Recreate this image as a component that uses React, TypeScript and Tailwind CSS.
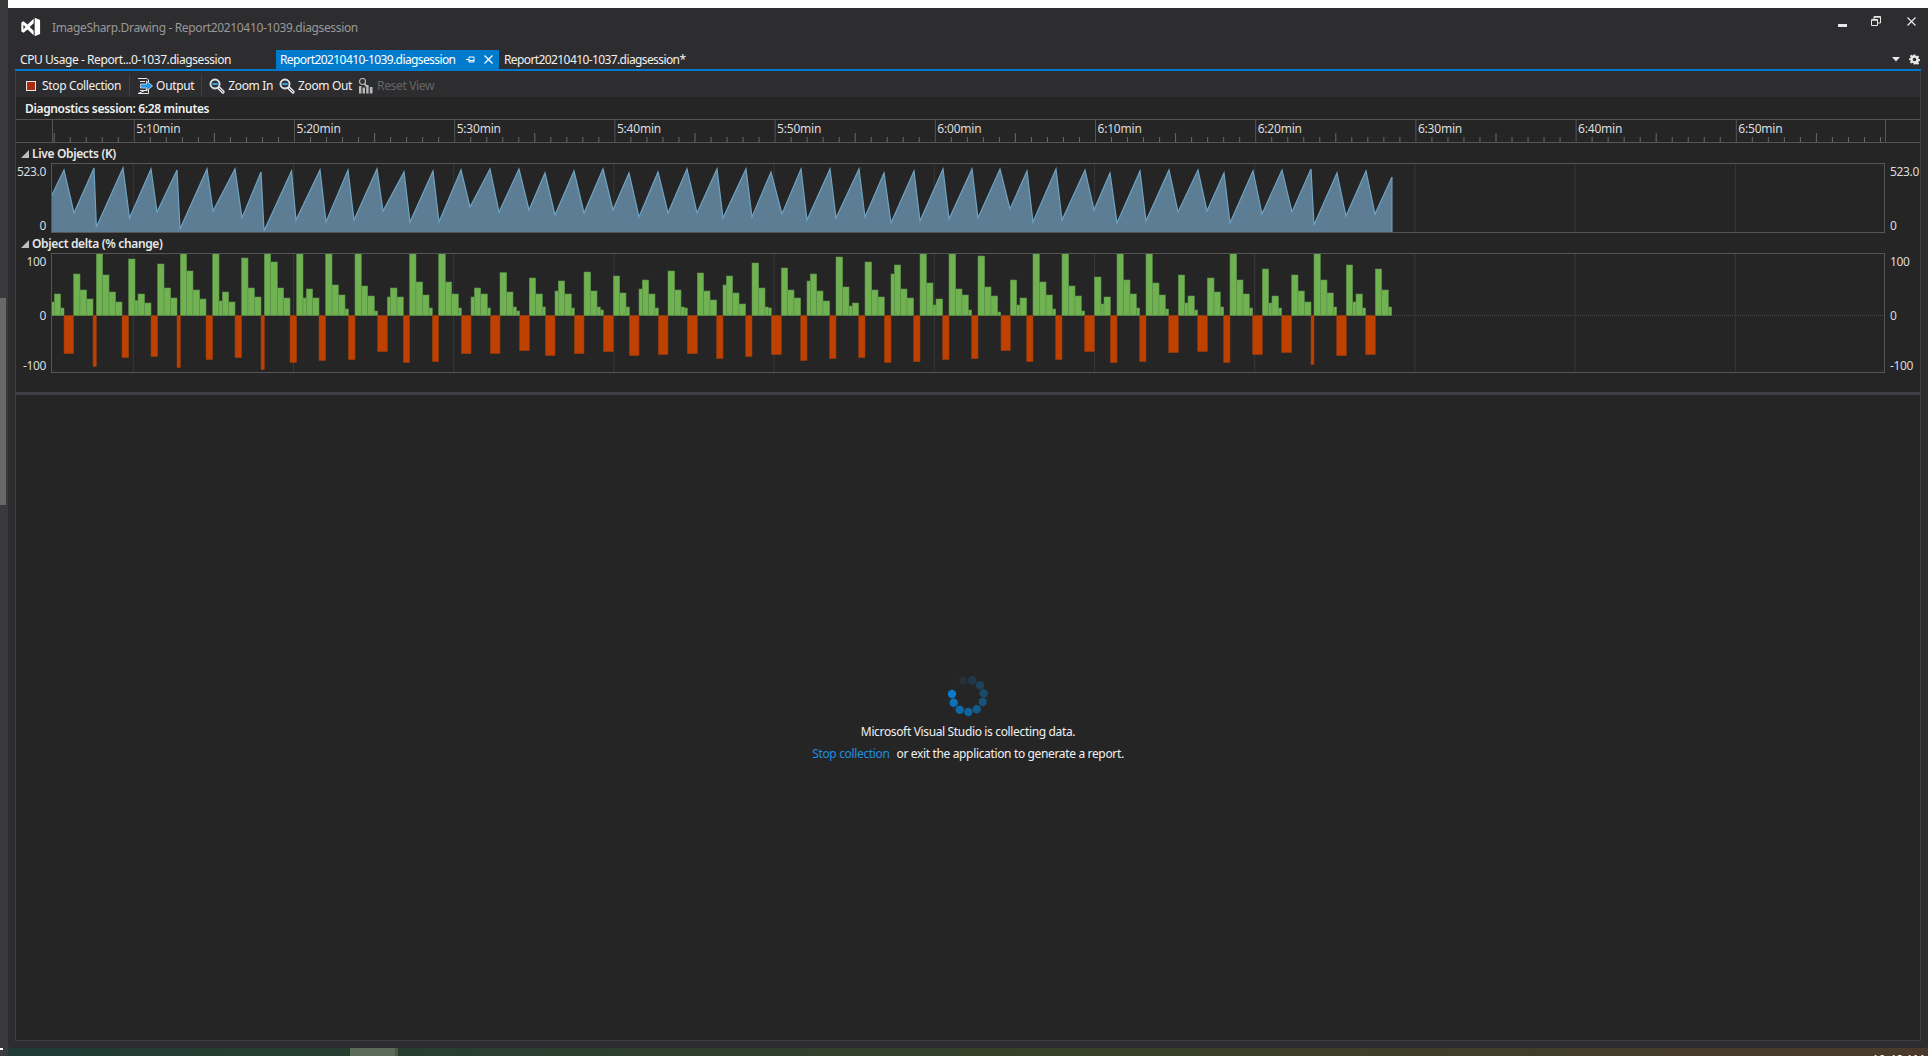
const FONT = "font-['Noto_Sans',sans-serif]";

// bars traced from the chart: [left, right, end], in 3x crop units
const GREEN: [number, number, number][][] = [
  [[155,163,216],[163,182,192],[182,192,234],[221,240,132],[240,260,180],[260,279,207],[289,308,72],[308,327,135],[327,347,186],[347,366,216],[386,405,87],[405,414,212],[414,434,192],[434,453,219],[473,492,102],[492,512,174],[512,531,204],[541,560,72],[560,579,123],[579,599,180],[599,618,207],[638,657,72],[657,667,213],[667,686,186],[686,705,216],[725,744,84],[744,763,174],[763,783,201],[793,812,72],[812,832,96],[832,851,174],[851,870,204],[890,909,72],[909,919,204],[919,938,177],[938,957,204],[977,996,72],[996,1015,165],[1015,1035,195],[1035,1045,237],[1065,1084,72],[1084,1103,168],[1103,1123,198],[1123,1133,243],[1162,1171,201],[1171,1191,174],[1191,1210,201],[1229,1248,72],[1248,1268,156],[1268,1287,195],[1287,1297,234],[1316,1336,72],[1336,1355,156],[1355,1375,192],[1375,1384,234],[1413,1423,201],[1423,1442,174],[1442,1462,192],[1462,1471,234]],
  [[0,20,368],[20,39,426],[39,49,471],[49,59,483],[88,107,384],[107,127,432],[127,136,471],[165,175,423],[175,194,393],[194,214,432],[214,223,474],[252,272,366],[272,291,423],[291,301,471],[301,310,480],[340,359,378],[359,378,429],[378,388,471],[417,427,417],[427,446,390],[446,465,432],[465,475,474],[504,524,363],[524,543,420],[543,553,471],[553,562,474],[592,611,369],[611,630,423],[630,650,450],[669,679,405],[679,698,378],[698,717,429],[717,737,462],[756,776,339],[776,795,414],[795,805,471],[805,814,474],[844,863,354],[863,882,420],[882,902,444],[921,931,393],[931,950,372],[950,969,423],[969,989,453],[1008,1028,321],[1028,1047,411],[1047,1057,468],[1057,1076,459],[1095,1115,336],[1115,1134,420],[1134,1153,441],[1173,1183,372],[1183,1202,345],[1202,1221,417],[1221,1241,444],[1260,1279,312],[1279,1299,399],[1299,1308,465],[1308,1328,447],[1347,1367,312],[1367,1386,417],[1386,1405,435],[1405,1415,480],[1434,1454,318],[1454,1473,411],[1473,1493,438],[1493,1502,486]],
  [[31,50,390],[50,60,465],[60,80,444],[99,118,312],[118,138,396],[138,157,435],[157,167,477],[186,206,312],[206,225,408],[225,244,438],[244,254,483],[283,303,381],[303,312,462],[312,331,441],[351,370,312],[370,390,390],[390,409,432],[409,419,474],[438,457,312],[457,477,399],[477,496,435],[496,506,477],[535,554,375],[554,564,459],[564,583,438],[583,593,480],[622,642,384],[642,661,426],[661,671,471],[690,710,312],[710,729,390],[729,748,432],[748,758,474],[787,806,357],[806,816,459],[816,835,438],[835,845,474],[875,894,375],[894,913,423],[913,933,456],[942,961,312],[961,981,390],[981,1000,429],[1000,1010,471],[1039,1058,345],[1058,1068,456],[1068,1087,432],[1087,1097,474],[1126,1145,357],[1145,1165,420],[1165,1175,471]],
];
const RED: [number, number, number][][] = [
  [[192,221,371],[279,289,410],[366,386,383],[453,473,380],[531,541,413],[618,638,389],[705,725,383],[783,793,419],[870,890,398],[957,977,392],[1045,1065,389],[1133,1162,365],[1210,1229,398],[1297,1316,395],[1384,1413,371],[1471,1500,371]],
  [[59,88,602],[136,165,617],[223,252,611],[310,340,605],[388,417,617],[475,504,614],[562,592,611],[650,669,626],[737,756,620],[814,844,614],[902,921,632],[989,1008,626],[1076,1095,623],[1153,1173,638],[1241,1260,635],[1328,1347,629],[1415,1434,626]],
  [[3,31,602],[80,99,635],[167,186,629],[254,283,605],[331,351,638],[419,438,635],[506,535,608],[593,622,605],[671,690,638],[758,787,614],[845,875,608],[933,942,644],[1010,1039,617],[1097,1126,614]],
];
const CROP = [{ x: 0, y: 230 }, { x: 500, y: 150 }, { x: 1000, y: 150 }];
const ZERO = 315.5;

const SAW = "51,197 64,170 74,213 94,168 96.4,227 123,168 129.5,218 151,169 157,212 177,170 180,229 207,169 213,211 235,169 242,218 261,172 264,231 291.5,171 296,220 320,170 326,222 348,170 354,220 377,169 383,211 404,172 410,222 433,171 439,222 461,170 470,207 490,169 499,212 519,169 529,210 545,173 555,215 574,171 584,213 603,169 613,210 629,173 639,217 658,172 668,213 687,169 697,213 717,169 723,218 746,169 752,217 771,172 782,214 801,169 807,220 830,169 836,218 859,169 865,217 884,173 891,223 914,171 920,221 943,169 949,219 972,169 978,218 1000,169 1010,209 1027,171 1033,222 1056,169 1062,220 1085,170 1094,210 1110,173 1117,223 1140,171 1146,221 1169,170 1178,212 1198,170 1207,211 1224,173 1230,223 1253,171 1262,214 1282,170 1292,212 1311,169 1314,225 1337,173 1346,216 1366,171 1375,214 1392,177";

const GRID = Array.from({ length: 11 }, (_, i) => 133.3 + i * 160.2);
const LABELS = ['5:10min', '5:20min', '5:30min', '5:40min', '5:50min', '6:00min', '6:10min', '6:20min', '6:30min', '6:40min', '6:50min'];

function VsLogo() {
  return (
    <svg width="21" height="20" viewBox="0 0 24 24" className="-mt-[2px] ml-3 shrink-0">
      <path fill="#fff" fillRule="evenodd" d="M1 6.500 3.500 5 8.500 9 15.800 2V7.500L11 12 15.800 16.500V22L8.500 15 3.500 19 1 17.500ZM3.500 9.200V14.800L6 12Z" />
      <path fill="#fff" d="M17 1 23.500 3.500V20.500L17 23Z" />
    </svg>
  );
}

function Magnifier() {
  return (
    <svg width="16" height="16" viewBox="0 0 16 16" className="shrink-0">
      <path d="M9.500 9.500 14 14" stroke="#e6e6e6" strokeWidth="3.200" strokeLinecap="round" />
      <path d="M10 10 14 14" stroke="#55555a" strokeWidth="1" strokeLinecap="round" />
      <circle cx="6" cy="6" r="5" fill="#d9e6ee" stroke="#e6e6e6" strokeWidth="1" />
      <circle cx="6" cy="6" r="3.600" fill="#2d3238" />
      <path d="M3.400 6H8.600" stroke="#3f9ddb" strokeWidth="2" />
    </svg>
  );
}

function OutputIcon() {
  return (
    <svg width="16" height="16" viewBox="0 0 16 16" className="shrink-0">
      <path d="M1 .5H10L11.500 2V5M11.500 11V15.500H1Z" fill="#2d2d30" stroke="#e6e6e6" />
      <path d="M3 3.500H8M3 12.500H9" stroke="#e6e6e6" />
      <path d="M3.500 6H9.500V3L15.500 8 9.500 13V10H3.500Z" fill="#1c97ea" stroke="#e6e6e6" strokeWidth=".8" />
    </svg>
  );
}

function ResetIcon() {
  return (
    <svg width="16" height="16" viewBox="0 0 16 16" className="shrink-0">
      <circle cx="4.500" cy="3.500" r="3" fill="#2d2d30" stroke="#b8b8b8" strokeWidth="1.200" />
      <path d="M6.500 6 9 8.500" stroke="#b8b8b8" strokeWidth="1.800" />
      <path d="M1 15.500V8H3.400V15.500ZM4.600 15.500V9.500H7V15.500ZM8.200 15.500V7H10.600V15.500ZM11.800 15.500V9H14.500V15.500Z" fill="#b8b8b8" />
    </svg>
  );
}

function Tool({ icon, label, muted }: { icon: React.ReactNode; label: string; muted?: boolean }) {
  return (
    <div className={`flex items-center gap-[3px] whitespace-nowrap ${muted ? 'text-[#656565]' : 'text-[#f1f1f1]'}`}>
      {icon}
      <span>{label}</span>
    </div>
  );
}

function Ruler() {
  const small: number[] = [];
  for (let i = -1; i < 11; i++) for (let j = 1; j < 10; j++) small.push(133.3 + i * 160.2 + j * 16.02);
  return (
    <div className="border-y border-[#555]">
      <svg width="1905" height="22" viewBox="15 120 1905 22" className="block">
        <line x1="51.5" x2="51.5" y1="120" y2="142" stroke="#555" />
        <line x1="1884.5" x2="1884.5" y1="120" y2="142" stroke="#555" />
        {small.filter((x) => x > 52 && x < 1880).map((x, i) => {
          const mid = Math.abs(((x - 133.3) / 160.2 + 100) % 1 - 0.5) < 0.01;
          return <line key={i} x1={x} x2={x} y1={mid ? 133 : 137} y2="142" stroke="#6a6a6a" />;
        })}
        {GRID.map((x, i) => (
          <g key={x}>
            <line x1={x} x2={x} y1="120" y2="142" stroke="#555" />
            <text x={x + 2} y="133" fill="#dcdcdc" fontSize="12" fontFamily="Noto Sans" letterSpacing="-0.2">{LABELS[i]}</text>
          </g>
        ))}
      </svg>
    </div>
  );
}

function AxisLabels({ labels, className }: { labels: string[]; className: string }) {
  return (
    <div className={`flex w-[36px] flex-col justify-between pt-[2px] leading-[14px] text-[#dcdcdc] ${className}`}>
      {labels.map((l) => <span key={l} className={l === '0' && labels.length === 3 ? 'mt-[4px]' : ''}>{l}</span>)}
    </div>
  );
}

function ChartRow({ top, bottom, children, labels }: { top: number; bottom: number; children: React.ReactNode; labels: string[] }) {
  const h = bottom - top;
  return (
    <div className="flex">
      <AxisLabels labels={labels} className="pr-[5px] text-right" />
      <div className="border border-[#555]">
        <svg width="1832" height={h} viewBox={`52 ${top} 1832 ${h}`} className="block">
          {GRID.map((x) => <line key={x} x1={x} x2={x} y1={top} y2={bottom} stroke="#383838" />)}
          {children}
        </svg>
      </div>
      <AxisLabels labels={labels} className="pl-[5px]" />
    </div>
  );
}

function Bars({ set, fill, edge }: { set: [number, number, number][][]; fill: string; edge: string }) {
  return (
    <>
      {set.flatMap((group, g) =>
        group.map(([a, b, c]) => {
          const x = CROP[g].x + a / 3;
          const w = (b - a) / 3;
          const end = CROP[g].y + c / 3;
          const y = Math.min(end, ZERO);
          return <rect key={`${g}-${a}`} x={x} y={y} width={w} height={Math.abs(end - ZERO)} fill={fill} stroke={edge} strokeWidth="0.6" />;
        }),
      )}
    </>
  );
}

function Spinner() {
  const dots = [
    [951, 694, '#0a7acb'], [952.7, 702.7, '#0b72b9'], [958.7, 709.7, '#0d6aa9'], [967.3, 712, '#10639b'], [975.7, 709.3, '#125b8b'],
    [981.7, 702, '#16537b'], [982.7, 693.3, '#1a4a69'], [979, 685.3, '#1d4259'], [971.3, 680.3, '#213848'], [962, 680.3, '#252f38'],
  ] as const;
  return (
    <svg width="44" height="44" viewBox="945 674 44 44" className="block">
      {dots.map(([x, y, c]) => <circle key={x} cx={x} cy={y} r="4.200" fill={c} />)}
    </svg>
  );
}

export default function App() {
  return (
    <div className={`flex h-[1056px] w-[1928px] overflow-hidden bg-[#2d2d30] text-[12px] ${FONT}`}>
      <div className="flex w-[8px] shrink-0 flex-col bg-[#3a3a3c]">
        <div className="h-[298px]" />
        <div className="h-[207px] w-[6px] bg-[#686868]" />
        <div className="flex-1" />
        <div className="mb-[6px] h-[2px] w-[3px] bg-white" />
      </div>

      <div className="flex min-w-0 flex-1 flex-col">
        <div className="h-[8px] bg-white" />

        <div className="flex h-[42px] items-center pb-[2px]">
          <VsLogo />
          <span className="ml-[11px] whitespace-nowrap tracking-[-0.35px] text-[#999]">ImageSharp.Drawing - Report20210410-1039.diagsession</span>
          <div className="ml-auto mr-[12px] flex items-center gap-[24px] pb-[14px]">
            <div className="mt-[8px] h-[3px] w-[9px] bg-[#e8e8e8]" />
            <svg width="10" height="10" viewBox="0 0 10 10"><path d="M3 3V.5H9.500V7H7M.5 3.500H6.500V9.500H.5Z" fill="none" stroke="#e8e8e8" /><path d="M3 1H9.500M1 4H6.500" stroke="#e8e8e8" strokeWidth="1.400" /></svg>
            <svg width="9" height="9" viewBox="0 0 9 9" className="ml-[2px]"><path d="M.5.5 8.500 8.500M8.500.5.5 8.500" stroke="#e8e8e8" strokeWidth="1.200" /></svg>
          </div>
        </div>

        <div className="flex h-[19px] items-center whitespace-nowrap pl-[12px] pr-[8px] text-[#f1f1f1]">
          <span className="w-[256px] tracking-[-0.43px]">CPU Usage - Report...0-1037.diagsession</span>
          <div className="flex h-full w-[223px] items-center bg-[#007acc] pl-[4px] tracking-[-0.6px] text-white">
            <span>Report20210410-1039.diagsession</span>
            <svg width="9" height="9" viewBox="0 0 9 9" className="ml-[11px]"><path d="M0 4.500H3M3 2V7H8V2ZM3 5.500H8" fill="none" stroke="#fff" /></svg>
            <svg width="9" height="9" viewBox="0 0 9 9" className="ml-[9px]"><path d="M.5.5 8.500 8.500M8.500.5.5 8.500" stroke="#fff" strokeWidth="1.200" /></svg>
          </div>
          <span className="ml-[5px] tracking-[-0.6px]">Report20210410-1037.diagsession*</span>
          <svg width="8" height="5" viewBox="0 0 8 5" className="ml-auto mr-[9px]"><path d="M0 0H8L4 4.500Z" fill="#e8e8e8" /></svg>
          <svg width="11" height="11" viewBox="0 0 24 24"><path fill="#e8e8e8" fillRule="evenodd" d="M10 1h4l.6 3.200 2 .8L19.300 3.200l2.800 2.800-1.800 2.700.8 2 3.100.6v4l-3.100.6-.8 2 1.800 2.700-2.800 2.800-2.700-1.800-2 .8L14 23h-4l-.6-3.200-2-.8-2.700 1.800-2.800-2.800 1.800-2.700-.8-2L0 13.700V9.700l2.900-.6.800-2L1.900 4.400 4.700 1.600l2.700 1.800 2-.8ZM12 8a4 4 0 1 0 0 8 4 4 0 0 0 0-8Z" /></svg>
        </div>

        <div className="ml-[7px] mr-[7px] h-[2px] bg-[#007acc]" />

        <div className="ml-[7px] mr-[7px] flex min-h-0 flex-1 flex-col border-x border-[#3f3f46] bg-[#252526] tracking-[-0.35px]">
          <div className="flex h-[26px] items-center bg-[#2d2d30] pl-[10px] pt-[3px] text-[#f1f1f1]">
            <Tool icon={<div className="mr-[3px] h-[10px] w-[10px] border border-[#e8e8e8] bg-[#a82a10]" />} label="Stop Collection" />
            <div className="ml-[8px] mr-[7px] h-[22px] w-px bg-[#3f3f46]" />
            <Tool icon={<OutputIcon />} label="Output" />
            <div className="ml-[7px] mr-[7px] h-[22px] w-px bg-[#3f3f46]" />
            <Tool icon={<Magnifier />} label="Zoom In" />
            <div className="w-[6px]" />
            <Tool icon={<Magnifier />} label="Zoom Out" />
            <div className="w-[6px]" />
            <Tool icon={<ResetIcon />} label="Reset View" muted />
          </div>

          <div className="flex h-[22px] items-center pl-[9px] pt-[2px] font-semibold text-[#f1f1f1]">Diagnostics session: 6:28 minutes</div>

          <Ruler />

          <div className="flex h-[20px] items-center gap-[3px] pl-[5px] pt-[2px] font-semibold text-[#e8e8e8]">
            <svg width="8" height="8" viewBox="0 0 8 8"><path d="M8 0V8H0Z" fill="#bdbdbd" /></svg>
            Live Objects (K)
          </div>
          <ChartRow top={164} bottom={232} labels={['523.0', '0']}>
            <polygon points={`${SAW} 1392,232 51,232`} fill="#5c7d93" />
            <polyline points={SAW} fill="none" stroke="#6fa3c2" strokeWidth="1.200" />
            <line x1="1392" x2="1392" y1="177" y2="232" stroke="#6fa3c2" />
          </ChartRow>

          <div className="flex h-[20px] items-center gap-[3px] pl-[5px] pt-[2px] font-semibold text-[#e8e8e8]">
            <svg width="8" height="8" viewBox="0 0 8 8"><path d="M8 0V8H0Z" fill="#bdbdbd" /></svg>
            Object delta (% change)
          </div>
          <ChartRow top={254} bottom={372} labels={['100', '0', '-100']}>
            <line x1="52" x2="1884" y1="315.500" y2="315.500" stroke="#4a4a4a" strokeDasharray="1 1" />
            <Bars set={GREEN} fill="#70b252" edge="#5b9146" />
            <Bars set={RED} fill="#bf4100" edge="#8f3c12" />
          </ChartRow>

          <div className="h-[19px]" />
          <div className="h-[3px] bg-[#3f3f46]" />

          <div className="flex flex-1 flex-col items-center pt-[279px] text-[#f1f1f1]">
            <Spinner />
            <div className="mt-[6px] leading-[16px]">Microsoft Visual Studio is collecting data.</div>
            <div className="mt-[6px] flex gap-[7px] leading-[16px]">
              <span className="text-[#1e8fe1]">Stop collection</span>
              <span>or exit the application to generate a report.</span>
            </div>
          </div>
        </div>

        <div className="ml-[7px] mr-[7px] h-px bg-[#3f3f46]" />
        <div className="h-[7px]" />
        <div className="relative h-[8px] overflow-hidden bg-gradient-to-r from-[#1f3b34] via-[#34402a] to-[#4a3a2b] tracking-normal">
          <div className="ml-[342px] flex h-full">
            <div className="h-full w-[45px] bg-[#5b6b58]" />
            <div className="h-full w-[3px] bg-[#4a5a48]" />
          </div>
          <span className="absolute left-[1864px] top-[5px] leading-[14px] text-white">10:46 AM</span>
        </div>
      </div>
    </div>
  );
}
